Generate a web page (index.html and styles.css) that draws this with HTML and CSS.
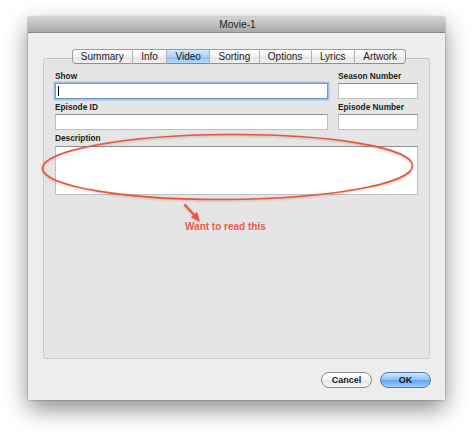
FILE: index.html
```html
<!DOCTYPE html>
<html>
<head>
<meta charset="utf-8">
<title>Movie-1</title>
<link rel="stylesheet" href="styles.css">
</head>
<body>
<div class="window">
  <div class="titlebar">Movie-1</div>
  <div class="tabview">
    <div class="tabs">
      <span class="tab first">Summary</span>
      <span class="tab">Info</span>
      <span class="tab selected">Video</span>
      <span class="tab">Sorting</span>
      <span class="tab">Options</span>
      <span class="tab">Lyrics</span>
      <span class="tab last">Artwork</span>
    </div>
    <div class="box">
      <div class="row">
        <div class="field wide">
          <label class="label">Show</label>
          <div class="input focused"><span class="caret"></span></div>
        </div>
        <div class="field narrow">
          <label class="label">Season Number</label>
          <div class="input"></div>
        </div>
      </div>
      <div class="row">
        <div class="field wide">
          <label class="label">Episode ID</label>
          <div class="input"></div>
        </div>
        <div class="field narrow">
          <label class="label">Episode Number</label>
          <div class="input"></div>
        </div>
      </div>
      <div class="field desc">
        <label class="label">Description</label>
        <div class="input area"></div>
      </div>
    </div>
  </div>
  <div class="footer">
    <button class="btn cancel">Cancel</button>
    <button class="btn ok">OK</button>
  </div>
  <svg class="annot" width="417" height="383" viewBox="0 0 417 383">
    <ellipse cx="199.5" cy="150" rx="185" ry="32.5" fill="none" stroke="#e8553f" stroke-width="1.6" transform="rotate(-0.4 199.5 150)"/>
    <line x1="157" y1="188" x2="168" y2="200" stroke="#e8553f" stroke-width="2.2" stroke-linecap="round"/>
    <polygon points="172,205 163,200 169,195" fill="#e8553f"/>
  </svg>
  <div class="note">Want to read this</div>
</div>
</body>
</html>
```
FILE: styles.css
```css
html, body {
  margin: 0;
  padding: 0;
  background: #ffffff;
}
html {
  height: 100%;
}
body {
  min-height: 100%;
  box-sizing: border-box;
  padding: 17px 0 0 28px;
  font-family: "Liberation Sans", Arial, sans-serif;
}
.window {
  position: relative;
  width: 417px;
  height: 383px;
  background: #ededed;
  box-shadow: 0 9px 22px rgba(0,0,0,0.45), 0 0 2px rgba(0,0,0,0.35);
  display: flex;
  flex-direction: column;
  box-sizing: border-box;
}
.titlebar {
  height: 16px;
  box-sizing: border-box;
  background: linear-gradient(#d3d3d3, #bababa 60%, #a8a8a8);
  border-bottom: 1px solid #878787;
  font-size: 10.3px;
  color: #1e1e1e;
  text-align: center;
  line-height: 15px;
  padding-left: 2px;
}
.tabview {
  margin: 16px 15px 0 15px;
  display: flex;
  flex-direction: column;
}
.tabs {
  position: relative;
  z-index: 1;
  display: flex;
  justify-content: center;
  height: 15px;
  padding-left: 5px;
}
.tab {
  display: block;
  height: 15px;
  box-sizing: border-box;
  padding: 0 8.3px;
  font-size: 10px;
  line-height: 13px;
  color: #1d1d1d;
  background: linear-gradient(#ffffff, #f1f1f1 50%, #e6e6e6 51%, #efefef);
  border-top: 1px solid #9c9c9c;
  border-bottom: 1px solid #8f8f8f;
  border-right: 1px solid #b3b3b3;
}
.tab.first {
  border-left: 1px solid #9c9c9c;
  border-radius: 4px 0 0 4px;
}
.tab.last {
  border-right: 1px solid #9c9c9c;
  border-radius: 0 4px 4px 0;
}
.tab.selected {
  background: linear-gradient(#d6e8fa, #aed2f6 50%, #8fc0f1 51%, #b4d9fb);
  color: #0e1b2c;
  border-top-color: #7f9fc4;
  border-bottom-color: #6b8cb5;
}
.box {
  margin-top: -6px;
  height: 301px;
  box-sizing: border-box;
  background: #e5e5e5;
  border: 1px solid #cdcdcd;
  border-top-color: #c2c2c2;
  border-radius: 3px;
  padding: 12px 11px 0 11px;
  display: flex;
  flex-direction: column;
  gap: 3px;
}
.row {
  display: flex;
  gap: 10px;
}
.field {
  display: flex;
  flex-direction: column;
}
.field.wide {
  width: 273px;
}
.field.narrow {
  width: 80px;
}
.label {
  font-size: 8.3px;
  font-weight: bold;
  line-height: 10px;
  color: #1b1b1b;
  margin-bottom: 2px;
}
.desc .label {
  margin-bottom: 3px;
}
.input {
  position: relative;
  height: 16px;
  box-sizing: border-box;
  background: #ffffff;
  border: 1px solid #c0c0c0;
  border-top-color: #8e8e8e;
}
.input.focused {
  border-color: #6f9ad0;
  box-shadow: 0 0 0 1.5px #9cc1ea;
}
.caret {
  position: absolute;
  left: 2px;
  top: 2px;
  width: 1px;
  height: 10px;
  background: #000;
}
.input.area {
  width: 363px;
  height: 49px;
}
.footer {
  display: flex;
  justify-content: flex-end;
  gap: 8px;
  padding: 13px 14px 0 0;
}
.btn {
  width: 51px;
  height: 16px;
  border-radius: 8px;
  font-family: "Liberation Sans", Arial, sans-serif;
  font-size: 9px;
  font-weight: bold;
  line-height: 14px;
  padding: 0;
  color: #1a1a1a;
}
.btn.cancel {
  background: linear-gradient(#ffffff, #f4f4f4 50%, #e4e4e4 51%, #f7f7f7);
  border: 1px solid #8a8a8a;
}
.btn.ok {
  background: linear-gradient(#cfe5fb, #8ec1f1 50%, #5ea3ea 51%, #9fd0fb);
  border: 1px solid #4f7db7;
  color: #0b1930;
}
.annot {
  position: absolute;
  left: 0;
  top: 0;
  pointer-events: none;
  filter: drop-shadow(0 1px 1px rgba(120,40,30,0.25));
}
.note {
  position: absolute;
  left: 157px;
  top: 203px;
  font-size: 10px;
  font-weight: bold;
  color: #ee5a4a;
  line-height: 14px;
}
```
